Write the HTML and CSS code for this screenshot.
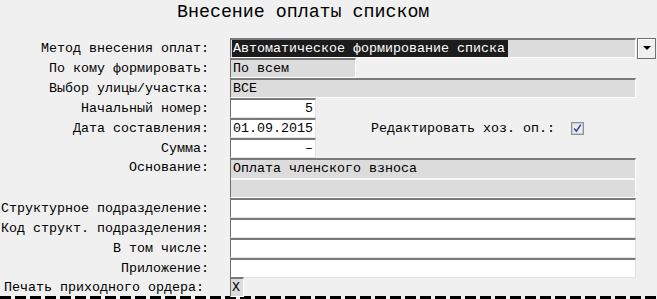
FILE: index.html
```html
<!DOCTYPE html>
<html lang="ru">
<head>
<meta charset="utf-8"/>
<title>Внесение оплаты списком</title>
<link rel="stylesheet" href="styles.css">
</head>
<body>
<h1 class="title">Внесение оплаты списком</h1>
<div class="form">
  <div class="row">
    <div class="label">Метод внесения оплат:</div>
    <div class="field gray wide combo"><span class="selected">Автоматическое формирование списка</span></div>
    <div class="drop-btn"><span class="arrow"></span></div>
  </div>
  <div class="row">
    <div class="label">По кому формировать:</div>
    <div class="field gray mid">По всем</div>
  </div>
  <div class="row">
    <div class="label">Выбор улицы/участка:</div>
    <div class="field gray wide">ВСЕ</div>
  </div>
  <div class="row">
    <div class="label">Начальный номер:</div>
    <div class="field short num">5</div>
  </div>
  <div class="row">
    <div class="label">Дата составления:</div>
    <div class="field short">01.09.2015</div>
    <div class="side-label">Редактировать хоз. оп.:</div>
    <div class="check">
      <svg width="13" height="13" viewBox="0 0 13 13">
        <rect x="0.5" y="0.5" width="12" height="12" fill="#e8ecf2" stroke="#8e8f8f"/>
        <rect x="1.5" y="1.5" width="10" height="10" fill="none" stroke="#c6cbd4"/>
        <path d="M3.2 6.6 L5.3 9.2 L9.8 2.6" fill="none" stroke="#3448a0" stroke-width="1.6"/>
      </svg>
    </div>
  </div>
  <div class="row">
    <div class="label">Сумма:</div>
    <div class="field short num">–</div>
  </div>
  <div class="row tall">
    <div class="label">Основание:</div>
    <div class="field gray wide memo">
      <div class="memo-line">Оплата членского взноса</div>
      <div class="memo-line second"></div>
    </div>
  </div>
  <div class="row">
    <div class="label">Структурное подразделение:</div>
    <div class="field wide"></div>
  </div>
  <div class="row">
    <div class="label">Код структ. подразделения:</div>
    <div class="field wide"></div>
  </div>
  <div class="row">
    <div class="label">В том числе:</div>
    <div class="field wide"></div>
  </div>
  <div class="row">
    <div class="label">Приложение:</div>
    <div class="field wide"></div>
  </div>
  <div class="row last">
    <div class="label print">Печать приходного ордера:</div>
    <div class="field gray tiny">X</div>
  </div>
</div>
<div class="dashes"></div>
</body>
</html>
```

FILE: styles.css
```css
body {
  font-family: 'Liberation Mono', 'Courier New', monospace;
  background-color: #f0f0f0;
  margin: 0;
  padding: 0;
  color: #000;
  font-size: 13.33px;
  overflow: hidden;
}
.title {
  font-size: 18.3px;
  font-weight: normal;
  margin: 0;
  height: 38px;
  line-height: 24px;
  padding-left: 177px;
  box-sizing: border-box;
}
.form {
  display: flex;
  flex-direction: column;
}
.row {
  display: flex;
  align-items: center;
  height: 20px;
}
.row.tall {
  height: 40px;
  align-items: flex-start;
}
.row.tall .label {
  line-height: 19px;
}
.row.last {
  height: 18px;
}
.label {
  width: 209px;
  margin-right: 21px;
  text-align: right;
  white-space: nowrap;
}
.label.print {
  width: 204px;
  margin-right: 26px;
}
.field {
  height: 20px;
  box-sizing: border-box;
  background-color: #fff;
  border-top: 2px solid #7a7a7a;
  border-left: 1px solid #6e6e6e;
  border-right: 1px solid #e3e3e3;
  border-bottom: 1px solid #e3e3e3;
  padding-left: 2px;
  line-height: 17px;
  white-space: nowrap;
  overflow: hidden;
}
.field.gray {
  background-color: #dcdcdc;
  border-right-color: #fff;
  border-bottom-color: #fff;
}
.wide {
  width: 406px;
}
.mid {
  width: 126px;
}
.short {
  width: 86px;
}
.tiny {
  width: 14px;
  padding-left: 1px;
}
.num {
  text-align: right;
  padding-right: 2px;
}
.combo {
  padding-left: 1px;
}
.selected {
  display: inline-block;
  background-color: #1c1c1c;
  color: #fff;
  padding: 0 3px 0 1px;
  line-height: 17px;
}
.drop-btn {
  width: 19px;
  height: 21px;
  margin-left: 1px;
  box-sizing: border-box;
  border: 1px solid #707070;
  box-shadow: inset 1px 1px 0 #fff;
  background-color: #f0f0f0;
  display: flex;
  align-items: center;
  justify-content: center;
}
.arrow {
  width: 0;
  height: 0;
  border-left: 4px solid transparent;
  border-right: 4px solid transparent;
  border-top: 4px solid #000;
}
.side-label {
  margin-left: 55px;
  width: 184px;
}
.check {
  margin-left: 16px;
  height: 13px;
  display: flex;
}
.memo {
  height: 40px;
  padding-left: 0;
}
.memo-line {
  height: 18px;
  line-height: 17px;
  padding-left: 2px;
}
.memo-line.second {
  height: 19px;
  box-sizing: border-box;
  border-top: 2px solid #f8f8f8;
}
.dashes {
  height: 3px;
  background: repeating-linear-gradient(90deg, #000 0 11px, transparent 11px 15px);
}
```
